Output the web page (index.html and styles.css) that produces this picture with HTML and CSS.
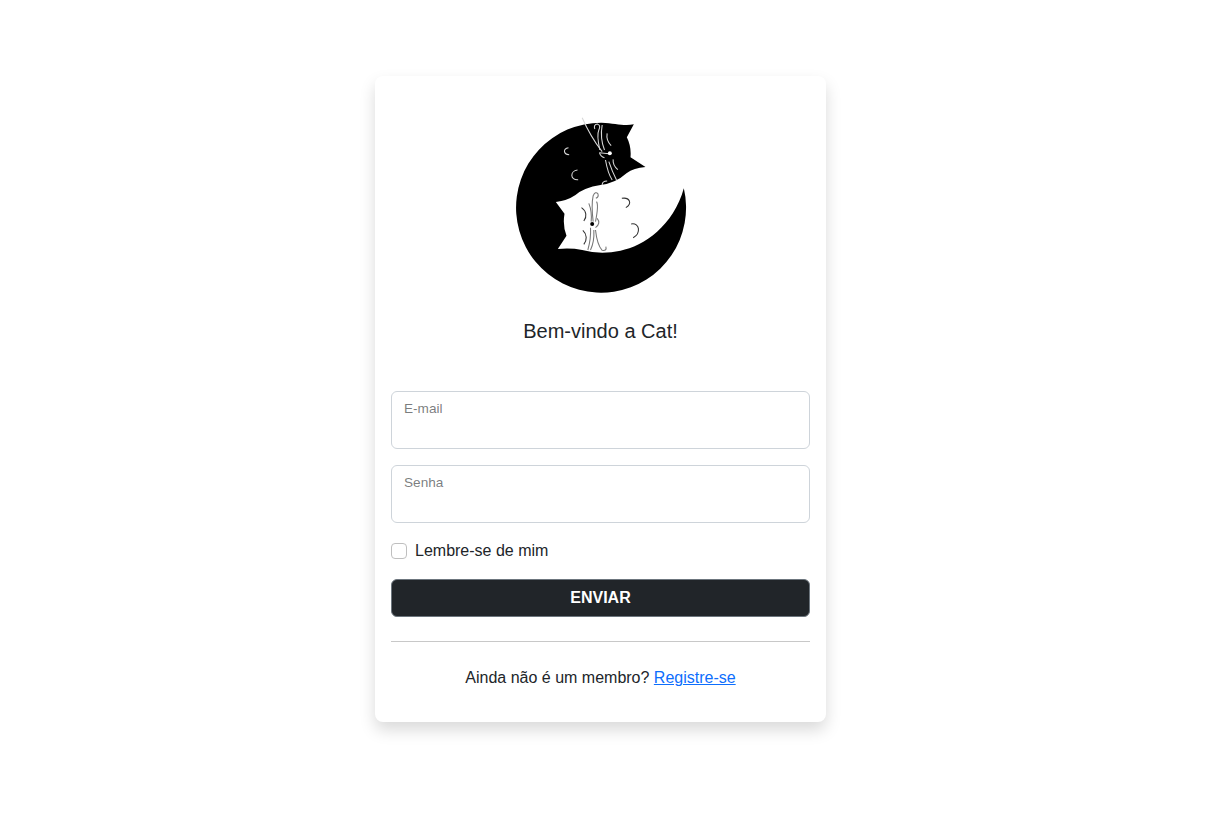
FILE: index.html
```html
<!DOCTYPE html>
<html lang="pt-BR">
<head>
    <meta charset="UTF-8">
    <meta name="viewport" content="width=device-width, initial-scale=1.0">
    <title>Login</title>
    <link rel="stylesheet" href="styles.css">
</head>
<body>
    <main class="login-card">
        <div class="logo-box">
            <svg class="logo" viewBox="1.5 0 600 600" xmlns="http://www.w3.org/2000/svg">
                <path class="cat-body" d="M550 250 A255 255 0 1 1 303 53 C345 55 370 64 400 58 L379 97 Q393 125 390 157 L435 186 Q400 188 378 205 Q345 235 300 240 Q250 248 225 270 Q200 287 166 291 L192 326 Q186 362 198 392 L172 432 Q210 428 245 435 Q300 450 360 437 C430 425 520 360 550 250 Z"></path>
                <!-- gato preto -->
                <g class="marks-light">
                    <path d="M204 128 C187 131 188 148 206 149"></path>
                    <path d="M231 195 C208 198 208 226 233 224"></path>
                    <path d="M245 38 Q270 95 305 140"></path>
                    <path d="M283 72 Q278 60 290 57 Q302 60 295 75 Q288 90 298 135"></path>
                    <path d="M305 60 Q298 100 312 135"></path>
                    <path d="M320 85 Q316 105 332 122"></path>
                    <path d="M338 163 Q336 180 352 194"></path>
                    <path d="M315 165 Q322 205 335 225"></path>
                    <path d="M325 170 Q335 200 348 225"></path>
                    <path d="M320 228 Q305 228 305 240"></path>
                    <path d="M297 143 L325 146"></path>
                    <path d="M297 143 Q300 155 312 158"></path>
                </g>
                <circle class="nose-light" cx="328" cy="145" r="6"></circle>
                <!-- gato branco -->
                <g class="marks-dark">
                    <path d="M265 295 Q275 320 272 350"></path>
                    <path d="M278 350 Q272 300 278 272 Q285 258 292 266 Q296 276 286 280"></path>
                    <path d="M285 350 Q295 300 288 290"></path>
                    <path d="M270 368 Q272 400 262 435"></path>
                    <path d="M280 375 Q282 410 270 435"></path>
                    <path d="M285 375 Q290 420 305 436 Q320 438 316 425"></path>
                    <path d="M290 340 Q302 355 285 368"></path>
                </g>
                <g class="marks-black">
                    <path d="M243 308 C258 318 260 335 250 348"></path>
                    <path d="M247 376 C260 388 260 405 250 418"></path>
                    <path d="M364 280 C388 276 396 296 376 308"></path>
                    <path d="M392 357 C418 352 422 385 398 398"></path>
                </g>
                <circle class="nose-dark" cx="275" cy="357" r="6"></circle>
            </svg>
            <h1 class="welcome">Bem-vindo a Cat!</h1>
        </div>

        <form class="login-form">
            <div class="floating">
                <input class="field" type="email" id="email">
                <label class="field-label" for="email">E-mail</label>
            </div>
            <div class="floating">
                <input class="field" type="password" id="senha">
                <label class="field-label" for="senha">Senha</label>
            </div>
            <label class="remember">
                <input class="check" type="checkbox">
                <span>Lembre-se de mim</span>
            </label>
            <button class="submit-button" type="button">ENVIAR</button>
        </form>

        <hr class="divider">

        <p class="signup">Ainda não é um membro? <a href="#">Registre-se</a></p>
    </main>
</body>
</html>
```

FILE: styles.css
```css
* {
    margin: 0;
    padding: 0;
    box-sizing: border-box;
}

html {
    background-color: #fff;
}

body {
    font-family: 'Liberation Sans', Arial, sans-serif;
    font-size: 16px;
    line-height: 1.5;
    color: #212529;
    min-height: 100vh;
    padding: 76px 13px 0 0;
}

.login-card {
    width: 451px;
    height: 646px;
    margin: 0 auto;
    padding: 29px 16px 0;
    background-color: #fff;
    border-radius: 8px;
    box-shadow: 0 8px 16px rgba(0, 0, 0, 0.15);
}

.logo-box {
    text-align: center;
}

.logo {
    display: block;
    width: 200px;
    height: 200px;
    margin: 0 auto;
}

.cat-body {
    fill: #000;
}

.marks-light,
.marks-dark,
.marks-black {
    fill: none;
    stroke-width: 3.2;
}

.marks-light {
    stroke: #d8d8d8;
}

.marks-dark {
    stroke: #777;
}

.marks-black {
    stroke: #333;
}

.nose-light {
    fill: #fff;
}

.nose-dark {
    fill: #000;
}

.welcome {
    margin-top: 11px;
    font-size: 20px;
    font-weight: 400;
    line-height: 30px;
}

.login-form {
    margin-top: 45px;
    display: flex;
    flex-direction: column;
}

.floating {
    position: relative;
    margin-bottom: 16px;
}

.field {
    display: block;
    width: 100%;
    height: 58px;
    padding: 26px 12px 8px;
    font: inherit;
    color: #212529;
    border: 1px solid #ced4da;
    border-radius: 6px;
    outline: none;
}

.field-label {
    position: absolute;
    top: 8px;
    left: 13px;
    font-size: 13.6px;
    line-height: 20px;
    color: rgba(33, 37, 41, 0.6);
}

.remember {
    display: flex;
    align-items: center;
    gap: 8px;
    height: 24px;
    margin-bottom: 16px;
}

.check {
    appearance: none;
    width: 16px;
    height: 16px;
    border: 1px solid #bfbfbf;
    border-radius: 4px;
    background-color: #fff;
}

.submit-button {
    height: 38px;
    font: inherit;
    font-weight: 700;
    color: #fff;
    background-color: #212529;
    border: 1px solid #6c757d;
    border-radius: 6px;
    cursor: pointer;
}

.divider {
    margin-top: 24px;
    border: none;
    border-top: 1px solid #c8c8c8;
}

.signup {
    margin-top: 24px;
    text-align: center;
}

.signup a {
    color: #0d6efd;
}
```
